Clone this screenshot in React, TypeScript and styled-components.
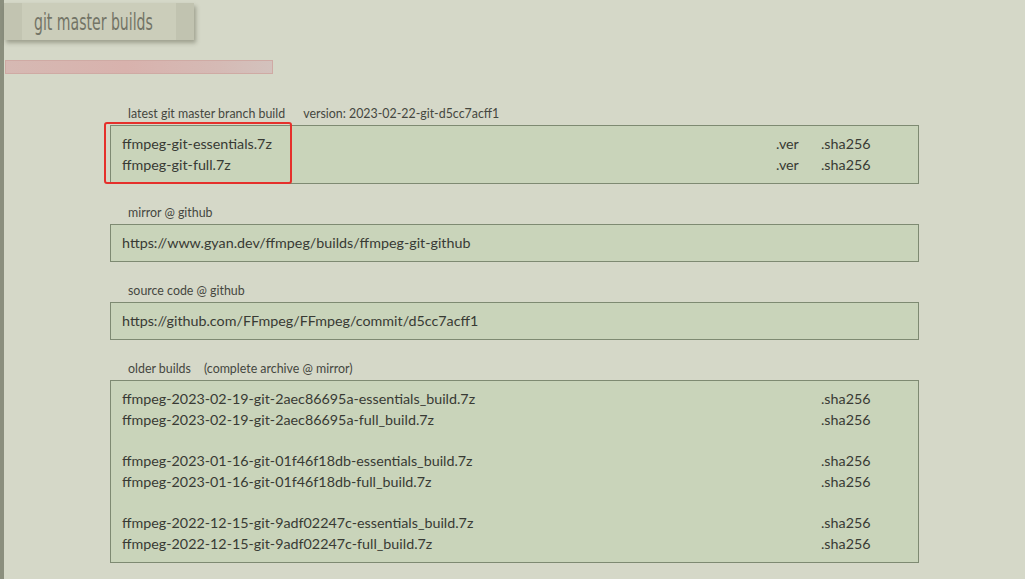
import styled, { createGlobalStyle } from 'styled-components';

const GlobalStyle = createGlobalStyle`
  html, body {
    margin: 0;
    padding: 0;
    background: #d5d8c8;
  }
  body {
    font-family: Lato, 'Open Sans', sans-serif;
  }
`;

const Page = styled.div`
  min-height: 579px;
  border-left: 4px solid #8b8f7e;
  box-sizing: border-box;
  display: flex;
  flex-direction: column;
`;

const TitleTab = styled.div`
  margin-top: 3px;
  width: 190px;
  height: 37px;
  box-sizing: border-box;
  display: flex;
  align-items: center;
  padding-left: 30px;
  background: linear-gradient(
    to right,
    #c2c4b1 0,
    #c2c4b1 18px,
    #cbcdba 18px,
    #cbcdba 172px,
    #c1c3b0 172px
  );
  box-shadow: 2px 3px 4px rgba(60, 60, 40, 0.35);
`;

const Title = styled.h1`
  margin: 0;
  font-family: 'Liberation Sans Narrow', 'DejaVu Sans Condensed', 'Roboto Condensed', sans-serif;
  font-size: 23px;
  font-weight: 400;
  color: #737466;
  transform: scaleX(0.68);
  transform-origin: left center;
  white-space: nowrap;
`;

const ProgressBar = styled.div`
  margin-top: 20px;
  margin-left: 1px;
  width: 268px;
  height: 14px;
  box-sizing: border-box;
  border: 1px solid #cfaaa4;
  background: linear-gradient(to right, #d6b9b3 0%, #d8b2ad 45%, #d5bab5 80%, #d3c2bd 100%);
`;

const Content = styled.main`
  margin-left: 106px;
  width: 809px;
  padding-top: 31px;
  display: flex;
  flex-direction: column;
  gap: 20px;
`;

const Section = styled.section`
  position: relative;
  display: flex;
  flex-direction: column;
`;

const LabelRow = styled.div<{ $gap?: number }>`
  display: flex;
  gap: ${(p) => p.$gap ?? 18}px;
  height: 14px;
  padding: 2px 0 4px 18px;
  font-size: 12.4px;
  line-height: 14px;
  color: #45473f;
`;

const Box = styled.div`
  border: 1px solid #7e8a72;
  background: #c9d4ba;
  padding: 7px 0 8px 11px;
  font-size: 14.3px;
  line-height: 21px;
  color: #383a34;
`;

const FileRow = styled.div`
  display: flex;
  align-items: center;
`;

const FileName = styled.span`
  flex: 1;
`;

const Ext = styled.span<{ $w: number }>`
  width: ${(p) => p.$w}px;
`;

const Spacer = styled.div`
  height: 20px;
`;

const Highlight = styled.div`
  position: absolute;
  left: -6px;
  top: 17px;
  width: 188px;
  height: 62px;
  box-sizing: border-box;
  border: 2px solid #e5302b;
  border-radius: 3px;
  pointer-events: none;
`;

const older = [
  ['ffmpeg-2023-02-19-git-2aec86695a-essentials_build.7z', 'ffmpeg-2023-02-19-git-2aec86695a-full_build.7z'],
  ['ffmpeg-2023-01-16-git-01f46f18db-essentials_build.7z', 'ffmpeg-2023-01-16-git-01f46f18db-full_build.7z'],
  ['ffmpeg-2022-12-15-git-9adf02247c-essentials_build.7z', 'ffmpeg-2022-12-15-git-9adf02247c-full_build.7z'],
];

export default function App() {
  return (
    <Page>
      <GlobalStyle />
      <TitleTab>
        <Title>git master builds</Title>
      </TitleTab>
      <ProgressBar />

      <Content>
        <Section>
          <LabelRow>
            <span>latest git master branch build</span>
            <span>version: 2023-02-22-git-d5cc7acff1</span>
          </LabelRow>
          <Box>
            {['ffmpeg-git-essentials.7z', 'ffmpeg-git-full.7z'].map((f) => (
              <FileRow key={f}>
                <FileName>{f}</FileName>
                <Ext $w={45}>.ver</Ext>
                <Ext $w={97}>.sha256</Ext>
              </FileRow>
            ))}
          </Box>
          <Highlight />
        </Section>

        <Section>
          <LabelRow>
            <span>mirror @ github</span>
          </LabelRow>
          <Box>https://www.gyan.dev/ffmpeg/builds/ffmpeg-git-github</Box>
        </Section>

        <Section>
          <LabelRow>
            <span>source code @ github</span>
          </LabelRow>
          <Box>https://github.com/FFmpeg/FFmpeg/commit/d5cc7acff1</Box>
        </Section>

        <Section>
          <LabelRow $gap={13}>
            <span>older builds</span>
            <span>(complete archive @ mirror)</span>
          </LabelRow>
          <Box>
            {older.map((group, i) => (
              <div key={i}>
                {i > 0 && <Spacer />}
                {group.map((f) => (
                  <FileRow key={f}>
                    <FileName>{f}</FileName>
                    <Ext $w={97}>.sha256</Ext>
                  </FileRow>
                ))}
              </div>
            ))}
          </Box>
        </Section>
      </Content>
    </Page>
  );
}
